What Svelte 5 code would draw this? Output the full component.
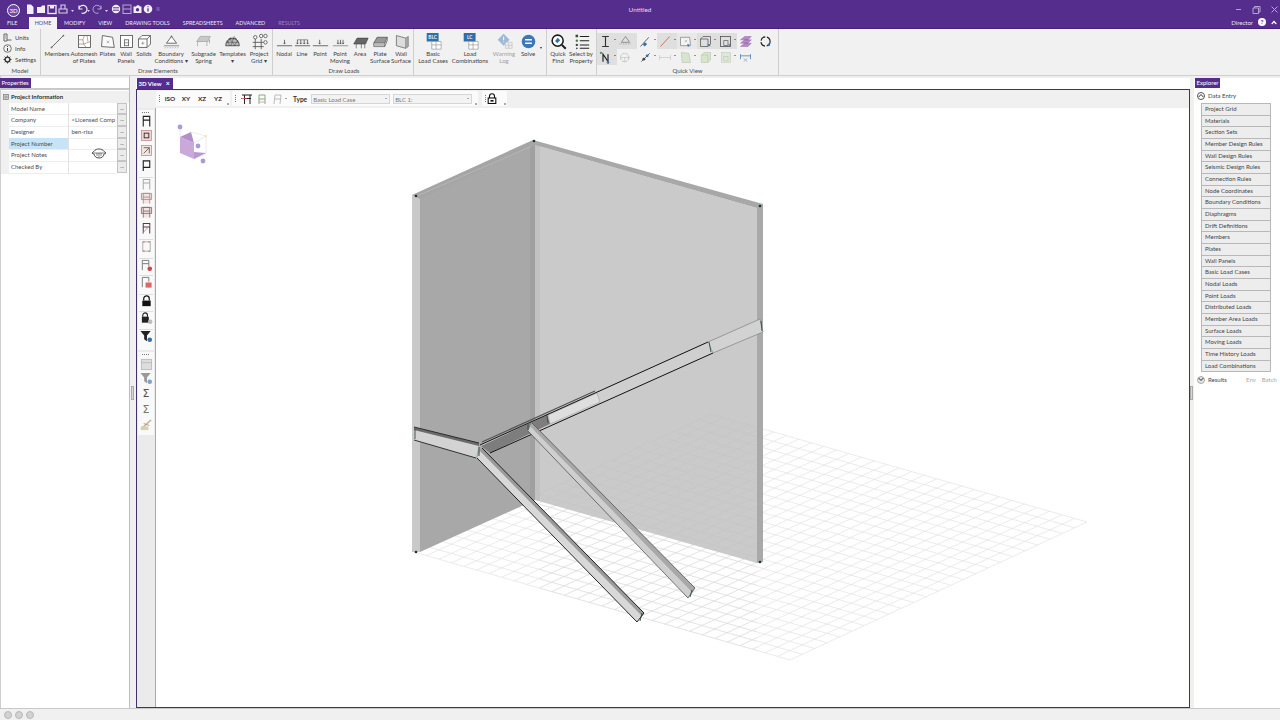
<script>
  const ln = 'fill="none" stroke="#555" stroke-width="1"';
  const arrow = (x, y) => `<path d="M${x} ${y - 5}V${y}" stroke="#333" stroke-width=".8"/><path d="M${x - 1.2} ${y - 1.5}L${x} ${y}L${x + 1.2} ${y - 1.5}" fill="none" stroke="#333" stroke-width=".6"/>`;

  const icons = {
    members: `<path d="M3 17L17 3" ${ln}/><circle cx="3" cy="17" r="1" fill="#666"/><circle cx="17" cy="3" r="1" fill="#666"/>`,
    automesh: `<rect x="3" y="3" width="14" height="14" fill="#fff" ${ln}/><path d="M3 8H8L10 3M8 8L9 13H3M9 13L17 10M9 13L12 17M13 3L14 10" fill="none" stroke="#8a6a5a" stroke-width=".7"/>`,
    plates: `<path d="M4 3L16 5L18 17L3 16Z" fill="#fafafa" ${ln}/><path d="M9 9L12 12M12 9L9 12" stroke="#888" stroke-width=".7"/>`,
    wall: `<rect x="3" y="3" width="14" height="14" fill="#fff" ${ln}/><rect x="7.5" y="8" width="5" height="7" fill="none" stroke="#555" stroke-width=".9"/><path d="M7.5 11.5h5" stroke="#555" stroke-width=".7"/>`,
    solids: `<path d="M3 7H13V17H3ZM3 7L7 3H17V13L13 17M13 7L17 3" fill="#fff" ${ln}/><path d="M8 10v4M6 12h4" stroke="#777" stroke-width=".7"/>`,
    boundary: `<path d="M10 4L4 12H16Z" fill="#fff" ${ln}/><path d="M1 15H19" stroke="#666" stroke-width=".8"/><path d="M3 16.5L2 18M6 16.5L5 18M9 16.5L8 18M12 16.5L11 18M15 16.5L14 18M18 16.5L17 18" stroke="#888" stroke-width=".6"/><circle cx="10" cy="4" r="1" fill="#666"/>`,
    subgrade: `<path d="M2 10L6 4H18L15 10Z" fill="#c8c8c8" stroke="#888" stroke-width=".6"/><path d="M3 11V15M14 11V15M17 8V12" stroke="#777" stroke-width="1" stroke-dasharray="1 .6"/>`,
    templates: `<path d="M2 15A8 9 0 0 1 18 15Z" fill="#bbb" stroke="#444" stroke-width="1"/><path d="M4 12L8 5M8 15L12 4M12 15L16 9M3 11H17M5 7H15M7 15L3 9M13 15L6 6M17 11L12 4" stroke="#333" stroke-width=".5"/>`,
    grid: `<path d="M5 7V19M12 7V19M2 11H15M2 16H15" ${ln}/><circle cx="5" cy="5" r="2" fill="#fff" ${ln}/><circle cx="12" cy="3.5" r="2" fill="#fff" ${ln}/><circle cx="17" cy="3.5" r="2" fill="#fff" ${ln}/><circle cx="17" cy="11" r="2" fill="#fff" ${ln}/>`,
    nodal: `<path d="M1 15H19" stroke="#555"/>${arrow(10, 13)}`,
    line: `<path d="M1 15H19" stroke="#555"/><path d="M4 8H16" stroke="#555" stroke-width=".7"/>${arrow(4, 13)}${arrow(8, 13)}${arrow(12, 13)}${arrow(16, 13)}`,
    point: `<path d="M1 15H19" stroke="#555"/>${arrow(9, 13)}`,
    moving: `<path d="M1 15H19" stroke="#888"/>${arrow(7, 13)}${arrow(10, 13)}${arrow(13, 13)}`,
    area: `<path d="M2 13L6 6H19L16 13Z" fill="#666" stroke="#333" stroke-width=".6"/><path d="M5 13V18M11 13V18M15 13V18" stroke="#444" stroke-width=".7"/>`,
    plate: `<path d="M2 12L6 5H18L15 12Z" fill="#999" stroke="#333" stroke-width=".7"/><path d="M2 12V16H15V12M15 16L18 9V5" fill="#bbb" stroke="#555" stroke-width=".7"/>`,
    wallsurf: `<path d="M4 3L15 6V18L4 15Z" fill="#ddd" stroke="#555" stroke-width=".8"/><path d="M15 6L18 4V16L15 18" fill="#aaa" stroke="#555" stroke-width=".6"/>`,
    blc: `<rect x="2" y="0" width="14" height="10" fill="#2f70ac"/><text x="9" y="7.6" text-anchor="middle" fill="#fff" font-size="5.6" font-weight="600">BLC</text><path d="M8 10H19V19H8ZM8 14H19M13 10V19" fill="#fff" stroke="#888" stroke-width=".7"/>`,
    lc: `<rect x="2" y="0" width="14" height="10" fill="#2f70ac"/><text x="9" y="7.6" text-anchor="middle" fill="#fff" font-size="5.6" font-weight="600">LC</text><path d="M8 10H19V19H8ZM8 14H19M13 10V19" fill="#fff" stroke="#888" stroke-width=".7"/>`,
    warning: `<path d="M9 1L16 8L9 15L2 8Z" fill="#9db9d6"/><path d="M9 4.5V8.5M9 10V11" stroke="#fff" stroke-width="1.2"/><path d="M11 11H19V18H11ZM11 14.5H19M15 11V18" fill="#eee" stroke="#bbb" stroke-width=".7"/>`,
    solve: `<circle cx="10" cy="10" r="8" fill="#3f77b6"/><path d="M6 8H14M6 12H14" stroke="#fff" stroke-width="1.7"/>`,
    find: `<circle cx="9" cy="9" r="6.5" fill="#fff" stroke="#1c1c1c" stroke-width="1.8"/><path d="M14 14L18.5 18.5" stroke="#1c1c1c" stroke-width="2.4"/><path d="M9 5.5L12 8.5L8.5 12L6 9.5Z" fill="#2f70ac"/>`,
    select: `<path d="M8 4H19M8 9H19M8 14H19M8 18H19" stroke="#222" stroke-width="1.2"/><rect x="3" y="2" width="3" height="3" fill="#444"/><circle cx="4.5" cy="9" r="1.4" fill="#3c7c44"/><circle cx="4.5" cy="14" r="1.4" fill="#444"/><circle cx="4.5" cy="18" r="1" fill="#444"/>`
  };

  const groups = [
    { name: "Draw Elements", width: 232, pad: 3, items: [
      { label: "Members", icon: "members", w: 26 },
      { label: "Automesh\nof Plates", icon: "automesh", w: 28 },
      { label: "Plates", icon: "plates", w: 19 },
      { label: "Wall\nPanels", icon: "wall", w: 18 },
      { label: "Solids", icon: "solids", w: 18 },
      { label: "Boundary\nConditions ▾", icon: "boundary", w: 36 },
      { label: "Subgrade\nSpring", icon: "subgrade", w: 29 },
      { label: "Templates\n▾", icon: "templates", w: 29 },
      { label: "Project\nGrid ▾", icon: "grid", w: 24 }
    ]},
    { name: "Draw Loads", width: 141, pad: 2, items: [
      { label: "Nodal", icon: "nodal", w: 18 },
      { label: "Line", icon: "line", w: 18 },
      { label: "Point", icon: "point", w: 18 },
      { label: "Point\nMoving", icon: "moving", w: 22 },
      { label: "Area", icon: "area", w: 18 },
      { label: "Plate\nSurface", icon: "plate", w: 22 },
      { label: "Wall\nSurface", icon: "wallsurf", w: 20 }
    ]},
    { name: "", width: 133, pad: 2, items: [
      { label: "Basic\nLoad Cases", icon: "blc", w: 34 },
      { label: "Load\nCombinations", icon: "lc", w: 40 },
      { label: "Warning\nLog", icon: "warning", w: 28, dim: true },
      { label: "Solve", icon: "solve", w: 20 }
    ]},
    { name: "", width: 50, pad: 0, items: [
      { label: "Quick\nFind", icon: "find", w: 22 },
      { label: "Select by\nProperty", icon: "select", w: 24 }
    ]}
  ];

  const quick = [
    { svg: `<path d="M5 3H13M9 3V15M5 15H13" stroke="#333" stroke-width="1.4"/>`, on: true, drop: true },
    { svg: `<path d="M9 3L4 10H14Z" fill="none" stroke="#777" stroke-width=".9"/><path d="M2 12H16" stroke="#999" stroke-dasharray="1 1"/>`, on: true },
    { svg: `<path d="M3 15L13 4" stroke="#444" stroke-width="1"/><path d="M8 10l3 2l-3 3l-2-2z" fill="#2f70ac"/>`, drop: true },
    { svg: `<path d="M3 15L14 3" stroke="#c87a50" stroke-width="1.2"/>`, on: true, drop: true },
    { svg: `<path d="M3 4H14L15 14H3Z" fill="#f4f4f4" stroke="#777" stroke-width=".8"/><path d="M8 7l3 3M11 7l-3 3" stroke="#999" stroke-width=".6"/><path d="M11 12l3 1l-2 3z" fill="#2f70ac"/>`, on: true, light: true, drop: true },
    { svg: `<path d="M3 6H12V15H3ZM3 6L6 3H15V12L12 15" fill="none" stroke="#555" stroke-width=".9"/><path d="M11 13l3-1l1 3z" fill="#2f70ac"/>`, on: true, drop: true },
    { svg: `<rect x="3" y="3" width="12" height="12" fill="none" stroke="#555"/><rect x="7" y="8" width="5" height="6" fill="none" stroke="#555" stroke-width=".8"/><path d="M12 13l3-1v3z" fill="#2f70ac"/>`, on: true, drop: true },
    { svg: `<path d="M3 7L8 3H16L12 7ZM3 11L8 7H16L12 11ZM3 15L8 11H16L12 15Z" fill="#b48ac4" stroke="#8a5a9e" stroke-width=".5"/>` },
    { svg: `<circle cx="9" cy="9" r="5.5" fill="none" stroke="#222" stroke-width="1.4" stroke-dasharray="7 2"/><circle cx="13" cy="13" r="1.6" fill="#2f70ac"/>` },
    { svg: `<circle cx="3.5" cy="3.5" r="1.3" fill="#3c9c54"/><path d="M6 14V5L12 14V5" fill="none" stroke="#222" stroke-width="1.4"/><path d="M12 11v5M10.5 14.5L12 16.5L13.5 14.5" fill="none" stroke="#2f70ac" stroke-width="1.1"/>`, on: true, drop: true },
    { svg: `<circle cx="8" cy="9" r="5" fill="none" stroke="#aaa" stroke-width=".8" stroke-dasharray="3 1"/><path d="M3 9H14M8 9V15" stroke="#bbb" stroke-width=".7"/>` },
    { svg: `<path d="M4 14L14 4" stroke="#444"/><circle cx="7" cy="11" r="1.7" fill="#444"/><circle cx="11" cy="7" r="1.7" fill="#2f70ac"/>`, drop: true },
    { svg: `<path d="M2 6V12M15 6V12M2 9H15" stroke="#ccc"/>`, drop: true },
    { svg: `<path d="M4 3L13 4L15 15L5 15Z" fill="#d8e4cc" stroke="#bbb" stroke-width=".7"/>`, drop: true },
    { svg: `<path d="M4 6H12V15H4ZM4 6L7 3H15V12L12 15" fill="#d8e4cc" stroke="#b8c4ac" stroke-width=".7"/>`, drop: true },
    { svg: `<rect x="4" y="3" width="11" height="12" fill="#dfe8d6" stroke="#c4ccbc" stroke-width=".7"/><rect x="7" y="8" width="5" height="5" fill="none" stroke="#bbb" stroke-width=".6"/>`, drop: true },
    { svg: `<path d="M3 5V11M15 5V11M3 7H15" stroke="#3f77b6" stroke-width=".9"/><path d="M7 10L11 14M11 10L7 14" stroke="#888" stroke-width=".7"/>` }
  ];

  const properties = [
    { label: "Model Name", value: "" },
    { label: "Company", value: "<Licensed Comp" },
    { label: "Designer", value: "ben-risa" },
    { label: "Project Number", value: "", selected: true },
    { label: "Project Notes", value: "" },
    { label: "Checked By", value: "" }
  ];

  const explorerItems = [
    "Project Grid", "Materials", "Section Sets", "Member Design Rules", "Wall Design Rules",
    "Seismic Design Rules", "Connection Rules", "Node Coordinates", "Boundary Conditions",
    "Diaphragms", "Drift Definitions", "Members", "Plates", "Wall Panels", "Basic Load Cases",
    "Nodal Loads", "Point Loads", "Distributed Loads", "Member Area Loads", "Surface Loads",
    "Moving Loads", "Time History Loads", "Load Combinations"
  ];

  const frame = "M3.5 12.5V1.5H10.5V12.5M3.5 5.5H10.5";
  // y is the icon's centre on the page, the gap to the next one gives the row height
  const sideTools = [
    { y: 122, svg: `<path d="${frame}" fill="none" stroke="#222" stroke-width="1.2"/>` },
    { y: 136, svg: `<rect x="1.5" y="1.5" width="11" height="11" fill="#f0d8d4" stroke="#b88" stroke-width=".8"/><rect x="4.5" y="4.5" width="5" height="5" fill="none" stroke="#333" stroke-width="1"/>` },
    { y: 151, svg: `<rect x="1.5" y="1.5" width="11" height="11" fill="#f4e4e0" stroke="#b88" stroke-width=".8"/><path d="M4 10L10 4M4 4H10V10" fill="none" stroke="#555" stroke-width=".9"/>` },
    { y: 166, sep: true, svg: `<path d="M3.5 13V2H10.5V9H3.5" fill="none" stroke="#222" stroke-width="1.2"/>` },
    { y: 185, svg: `<path d="${frame}" fill="none" stroke="#aaa" stroke-width="1.1"/>` },
    { y: 199, svg: `<path d="${frame}M1.5 1.5H12.5V8H1.5Z" fill="#f2e4e2" stroke="#a88" stroke-width=".9"/>` },
    { y: 213, svg: `<path d="${frame}M1.5 1.5H12.5V8H1.5Z" fill="#f2e4e2" stroke="#866" stroke-width=".9"/>` },
    { y: 229, sep: true, svg: `<path d="${frame}" fill="none" stroke="#444" stroke-width="1.1"/><path d="M3 12L11 3" stroke="#c88" stroke-width=".9"/>` },
    { y: 247, sep: true, svg: `<rect x="3" y="2" width="8" height="10" fill="none" stroke="#aaa" stroke-width="1"/><path d="M3 2h2M11 12H9M3 12h2M11 2H9" stroke="#c66" stroke-width="1"/>` },
    { y: 266, sep: true, svg: `<path d="M2.5 12V1.5H9.5V8M2.5 5H9.5" fill="none" stroke="#777" stroke-width="1"/><circle cx="10.5" cy="10.5" r="2.5" fill="#c44"/>` },
    { y: 283, sep: true, svg: `<path d="M2.5 12V1.5H9.5V6" fill="none" stroke="#777" stroke-width="1"/><rect x="6" y="7" width="6.5" height="5.5" fill="#d66"/>` },
    { y: 302, sep: true, svg: `<path d="M4 6V4A3 3 0 0 1 10 4V6" fill="none" stroke="#111" stroke-width="1.3"/><rect x="2.5" y="6" width="9" height="6" fill="#111"/>` },
    { y: 319, sep: true, svg: `<path d="M3 5V3.5A2.5 2.5 0 0 1 8 3.5V5" fill="none" stroke="#222" stroke-width="1.2"/><rect x="2" y="5" width="7.5" height="6.5" fill="#222"/><circle cx="11" cy="10.5" r="2.4" fill="#bbb"/>` },
    { y: 337, svg: `<path d="M0.5 1H11.5L7.5 6V12L4.5 10V6Z" fill="#222"/><circle cx="10.5" cy="10.5" r="2.5" fill="#2f70ac"/>` }
  ];
  const sideTools2 = [
    { y: 365, svg: `<rect x="1.5" y="1.5" width="11" height="11" fill="#ddd" stroke="#bbb"/><path d="M1.5 5H12.5" stroke="#bbb"/>` },
    { y: 379, svg: `<path d="M0.5 1H11.5L7.5 6V12L4.5 10V6Z" fill="#999"/><circle cx="10.5" cy="10.5" r="2.5" fill="#7aa4d4"/>` },
    { y: 394, text: "Σ" },
    { y: 410, text: "Σ", dot: true },
    { y: 425, svg: `<path d="M1 12L12 2" stroke="#b8c090" stroke-width="1.6"/><path d="M1 9H9V13H1Z" fill="#d8d0a8"/><path d="M4 6L10 8" stroke="#c89" stroke-width="1"/>` }
  ];
  const rowHeight = (list, i) => (i + 1 < list.length ? list[i + 1].y - list[i].y : 14);

  // floor grid is a parallelogram in page coordinates
  const L = [414, 552], F = [790, 660], R = [1087, 522];
  const B = [L[0] + R[0] - F[0], L[1] + R[1] - F[1]];
  const mix = (a, b, t) => [a[0] + (b[0] - a[0]) * t, a[1] + (b[1] - a[1]) * t];
  let floorLines = [];
  for (let i = 0; i <= 30; i++) floorLines.push([mix(L, F, i / 30), mix(B, R, i / 30)]);
  for (let j = 0; j <= 24; j++) floorLines.push([mix(L, B, j / 24), mix(F, R, j / 24)]);

  // part of the floor that shows through the right wall
  const yAt = (l, x) => l[0][1] + ((x - l[0][0]) * (l[1][1] - l[0][1])) / (l[1][0] - l[0][0]);
  const wallLines = floorLines
    .filter((l) => l[1][0] > 540 && l[0][0] < 757)
    .map((l) => {
      const x1 = Math.max(l[0][0], 540);
      const x2 = Math.min(l[1][0], 757);
      return [x1, yAt(l, x1), x2, yAt(l, x2)];
    });

  const ticks = [
    [415, 429, 415, 439], [479, 447, 479, 456], [709, 342, 711, 352], [761, 321, 762, 331],
    [642, 613, 640, 621], [692, 590, 690, 597], [547, 415, 548, 423], [528, 423, 528, 430]
  ];
  const nodes = [[416, 196], [534, 141], [760, 206], [416, 552], [760, 562]];
</script>

<div class="app">
  <header class="titlebar">
    <div class="quick-row">
      <span class="logo">3D</span>
      <svg class="qat" width="170" height="14" viewBox="0 0 170 14">
        <path d="M27 2.5H31L33.5 5V12H27Z" fill="#f2eef8"/>
        <path d="M37 5H41L42 3.5H45V11H37Z" fill="#f2eef8"/>
        <rect x="48" y="3.5" width="8" height="8" fill="none" stroke="#f2eef8" stroke-width="1.3"/><rect x="50" y="3.5" width="4" height="3" fill="#f2eef8"/>
        <path d="M59 7H67V11H59ZM61 7V3H65V7" fill="none" stroke="#ddd0ee" stroke-width="1.1"/>
        <path d="M71 8h3l-1.5 2z" fill="#ddd0ee"/>
        <path d="M79 3.5V7H82.5M79 7A4 4 0 1 1 81.5 11" fill="none" stroke="#f2eef8" stroke-width="1.2"/>
        <path d="M87 8h3l-1.5 2z" fill="#ddd0ee"/>
        <path d="M101 3.5V7H97.5M101 7A4 4 0 1 0 98.5 11" fill="none" stroke="#b9a6d6" stroke-width="1"/>
        <path d="M105 8h3l-1.5 2z" fill="#ddd0ee"/>
        <circle cx="116" cy="7" r="4.2" fill="#f2eef8"/><path d="M113 5.8h6M113 8.2h6" stroke="#552d8d" stroke-width="1"/>
        <rect x="123" y="3" width="8" height="8.5" fill="none" stroke="#b9a6d6" stroke-width="1"/><path d="M123 7h8" stroke="#b9a6d6"/>
        <path d="M133.5 4.5H136L137 3.3H139L140 4.5H141.5V11H133.5Z" fill="#f2eef8"/><circle cx="137.5" cy="7.7" r="1.7" fill="#552d8d"/>
        <circle cx="148" cy="7" r="4.3" fill="#f2eef8"/><path d="M148 6.2V9.6M148 4.2V5.2" stroke="#552d8d" stroke-width="1.3"/>
        <path d="M156.5 6h3M156.5 8h3" stroke="#b9a6d6" stroke-width=".7"/>
      </svg>
      <span class="doc-title">Untitled</span>
      <svg class="window-btns" width="48" height="12" viewBox="0 0 48 12">
        <path d="M2 6.5H7" stroke="#b5a4d0"/><path d="M19 5H24.5V10.5H19ZM20.5 5V3.5H26V9H24.5" fill="none" stroke="#b5a4d0"/><path d="M37.5 3.5L43.5 9.5M43.5 3.5L37.5 9.5" stroke="#b5a4d0"/>
      </svg>
    </div>
    <div class="tab-row">
      <nav class="tabs">
        <span class="tab file">FILE</span>
        <span class="tab active">HOME</span>
        <span class="tab">MODIFY</span>
        <span class="tab">VIEW</span>
        <span class="tab">DRAWING TOOLS</span>
        <span class="tab">SPREADSHEETS</span>
        <span class="tab">ADVANCED</span>
        <span class="tab off">RESULTS</span>
      </nav>
      <div class="user">
        <span>Director</span>
        <span class="help">?</span>
        <svg width="6" height="5" viewBox="0 0 6 5"><path d="M.7 4L3 1.5L5.3 4" fill="none" stroke="#fff" stroke-width="1.2"/></svg>
      </div>
    </div>
  </header>

  <section class="ribbon">
    <div class="group model" style="width: 41px">
      <div class="model-items">
        <div class="model-row">
          <svg width="9" height="9" viewBox="0 0 9 9"><path d="M1 1H4V8H1ZM4 7H8.5" fill="none" stroke="#666"/><path d="M2 3h1M2 5h1" stroke="#666" stroke-width=".6"/></svg>Units
        </div>
        <div class="model-row">
          <svg width="9" height="9" viewBox="0 0 9 9"><circle cx="4.5" cy="4.5" r="3.8" fill="none" stroke="#555" stroke-width=".8"/><path d="M4.5 4V7M4.5 2V3" stroke="#444"/></svg>Info
        </div>
        <div class="model-row">
          <svg width="9" height="9" viewBox="0 0 9 9"><circle cx="4.5" cy="4.5" r="2.4" fill="none" stroke="#333" stroke-width="1.4"/><path d="M4.5 .5V8.5M.5 4.5H8.5M1.7 1.7L7.3 7.3M7.3 1.7L1.7 7.3" stroke="#333" stroke-width=".9" stroke-dasharray="1.4 5.2 1.4 5"/></svg>Settings
        </div>
      </div>
      <div class="group-name">Model</div>
    </div>

    {#each groups as g}
      <div class="group" style="width: {g.width}px; padding-left: {g.pad}px">
        <div class="group-items">
          {#each g.items as item}
            <div class="rbtn" class:dim={item.dim} style="width: {item.w}px">
              <svg class="ricon" width="17" height="17" viewBox="0 0 20 20">{@html icons[item.icon]}</svg>
              <span class="rlabel">{item.label}</span>
            </div>
          {/each}
          {#if g.items[g.items.length - 1].label === "Solve"}
            <span class="solve-drop"></span>
          {/if}
        </div>
        <div class="group-name">{g.name}</div>
      </div>
    {/each}

    <div class="group quick-view" style="width: 182px">
      <div class="quick-grid">
        {#each quick as q}
          <div class="qcell" class:on={q.on} class:light={q.light}>
            <svg width="15" height="15" viewBox="0 0 18 18">{@html q.svg}</svg>
            {#if q.drop}<span class="mini-drop"></span>{/if}
          </div>
        {/each}
      </div>
      <div class="group-name">Quick View</div>
    </div>
  </section>

  <main class="workspace">
    <aside class="properties">
      <div class="panel-tabs"><span class="panel-tab">Properties</span></div>
      <div class="panel-body">
        <div class="prop-head">
          <svg width="6" height="6" viewBox="0 0 7 7"><rect x=".5" y=".5" width="6" height="6" fill="#ddd" stroke="#777" stroke-width=".8"/><path d="M1.5 2.5h4M1.5 4.5h4" stroke="#555" stroke-width=".7"/></svg>
          Project Information
        </div>
        {#each properties as p}
          <div class="prop-row">
            <span class="prop-name" class:selected={p.selected}>{p.label}</span>
            <span class="prop-value">{p.value}</span>
            <span class="prop-more">...</span>
          </div>
        {/each}
        <svg class="hand" width="16" height="11" viewBox="0 0 16 11">
          <path d="M3 3.5C4 1.5 6 1 8 1S12 1.5 13 3.5L15 5L13 6C12.5 8.5 11 10 8 10S3.5 8.5 3 6L1 5Z" fill="#fff" stroke="#222" stroke-width=".8"/>
          <path d="M3 5H13M6 5V8M8 5V9M10 5V8" stroke="#333" stroke-width=".6"/>
        </svg>
      </div>
    </aside>

    <div class="splitter"><span class="grip"></span></div>

    <section class="view">
      <div class="view-tabs">
        <span class="view-tab">3D View <b>×</b></span>
      </div>
      <div class="view-frame">
        <div class="view-toolbar">
          <div class="tb tb-views">
            <span class="gripper"></span>
            <span class="vbtn">ISO</span><span class="vbtn">XY</span><span class="vbtn">XZ</span><span class="vbtn">YZ</span>
          </div>
          <div class="tb tb-type">
            <span class="gripper"></span>
            <svg width="12" height="12" viewBox="0 0 12 12"><path d="M1 2H11M3.5 5.5H10M3.5 2V11M9 2V11" fill="none" stroke="#222"/><path d="M0 5.5H6" stroke="#c44" stroke-width=".8"/></svg>
            <svg width="12" height="12" viewBox="0 0 12 12"><path d="M3 11V2H9V11M3 6H9" fill="none" stroke="#8a8" stroke-width="1"/><path d="M3 9H9" stroke="#c99" stroke-width=".8"/></svg>
            <svg width="12" height="12" viewBox="0 0 12 12"><path d="M3 11L4 2H10L9 11M4 6H10" fill="none" stroke="#bbb" stroke-width="1"/></svg>
            <span class="tiny-drop"></span>
            <b class="type-label">Type</b>
            <span class="combo">Basic Load Case<i></i></span>
            <span class="combo">BLC 1:<i></i></span>
          </div>
          <div class="tb tb-lock">
            <span class="gripper"></span>
            <svg width="10" height="11" viewBox="0 0 10 11"><path d="M2.5 5V3.2A2.5 2.5 0 0 1 7.5 3.2V5" fill="none" stroke="#111" stroke-width="1.1"/><rect x="1.2" y="5" width="7.6" height="5.5" fill="none" stroke="#111" stroke-width="1.1"/><rect x="3.5" y="7" width="3" height="1.6" fill="#111"/></svg>
          </div>
        </div>
        <div class="view-main">
          <div class="side-col">
            <div class="side-group first">
              <span class="gripper-h"></span>
              {#each sideTools as t, i}
                <div class="side-tool" class:sep={t.sep} style="height: {rowHeight(sideTools, i)}px">
                  <svg width="13" height="13" viewBox="0 0 14 14">{@html t.svg}</svg>
                </div>
              {/each}
            </div>
            <div class="side-group second">
              <span class="gripper-h"></span>
              {#each sideTools2 as t, i}
                <div class="side-tool" style="height: {rowHeight(sideTools2, i)}px">
                  {#if t.text}
                    <span class="sigma" class:faded={t.dot}>{t.text}</span>
                  {:else}
                    <svg width="13" height="13" viewBox="0 0 14 14">{@html t.svg}</svg>
                  {/if}
                </div>
              {/each}
            </div>
          </div>

          <div class="canvas">
            <svg viewBox="156 108 1033 599" width="1033" height="599">
              <g stroke="#e2e2e2" stroke-width=".7">
                {#each floorLines as l}
                  <line x1={l[0][0]} y1={l[0][1]} x2={l[1][0]} y2={l[1][1]} />
                {/each}
              </g>

              <!-- walls -->
              <polygon points="412,195 420,198 420,552 412,552" fill="#c9c9c9" />
              <polygon points="420,198 535,145 535,500 420,552" fill="#a8a8a8" />
              <polygon points="412,195 533,140 538,144 420,199" fill="#a5a5a5" />
              <line x1="417" y1="196" x2="532" y2="146" stroke="#bdbdbd" stroke-width=".7" />
              <polygon points="530,147 535,145 535,500 530,502" fill="#a0a0a0" />
              <polygon points="535,145 757,208 757,563 535,500" fill="#cacaca" />
              <polygon points="535,145 540,146 540,501 535,500" fill="#c2c2c2" />
              <polygon points="533,140 763,204 763,208 757,208 535,145" fill="#a8a8a8" />
              <polygon points="757,207 763,205 763,562 757,563" fill="#a9a9a9" />
              <g stroke="#b4b4b4" stroke-width=".6" opacity=".2">
                {#each wallLines as l}
                  <line x1={l[0]} y1={l[1]} x2={l[2]} y2={l[3]} />
                {/each}
              </g>

              <!-- horizontal beam -->
              <polygon points="708,342 760,319 763,332 713,353" fill="#d2d2d2" stroke="#8a8a8a" stroke-width=".8" />
              <polygon points="480,445 708,342 713,353 490,453" fill="#cfcfcf" />
              <polygon points="548,415 597,393 600,402 550,424" fill="#dedede" stroke="#999" stroke-width=".5" />
              <polygon points="481,446 547,415 550,424 490,453" fill="#7d7d7d" />
              <path d="M480 445L708 342" stroke="#111" stroke-width="1" fill="none" />
              <path d="M482 442L595 391" stroke="#555" stroke-width="1.2" fill="none" />
              <path d="M490 453L713 353" stroke="#111" stroke-width="1" fill="none" />

              <!-- left stub -->
              <polygon points="414,427 479,444 476,458 414,440" fill="#d3d3d3" />
              <polygon points="414,427 479,443 479,446 414,430" fill="#6a6a6a" />
              <path d="M414 427L479 443M414 440L476 458" stroke="#222" stroke-width=".9" fill="none" />

              <!-- braces -->
              <polygon points="532,423 695,588 688,598 528,431" fill="#cfcfcf" />
              <polygon points="532,423 695,588 692,592 530,426" fill="#a8a8a8" />
              <path d="M532 423L695 588M528 431L688 598M695 588L688 598" stroke="#444" stroke-width=".7" fill="none" />

              <polygon points="482,448 644,613 637,622 477,458" fill="#d8d8d8" />
              <polygon points="482,448 644,613 642,616 480,451" fill="#9a9a9a" />
              <path d="M482 448L644 613M477 458L637 622M644 613L637 622" stroke="#111" stroke-width=".9" fill="none" />

              <g stroke="#2a4f34" stroke-width=".9">
                {#each ticks as t}
                  <line x1={t[0]} y1={t[1]} x2={t[2]} y2={t[3]} />
                {/each}
              </g>
              {#each nodes as n}
                <circle cx={n[0]} cy={n[1]} r="1.3" fill="#17372a" />
              {/each}

              <!-- orientation cube -->
              <g>
                <path d="M191 132L206 136V153L194 159M180 137V127M194 143L206 136" fill="none" stroke="#e4e0ec" stroke-width=".7" />
                <polygon points="180,137 191,132 194,143" fill="#b092c8" />
                <polygon points="180,137 194,143 194,159 180,153" fill="#c9a9d9" />
                <polygon points="194,152 206,153 194,159" fill="#b59ad0" />
                <circle cx="180" cy="127" r="2.4" fill="#a99bd6" />
                <circle cx="198" cy="146" r="2.4" fill="#a99bd6" />
                <circle cx="203" cy="161" r="2.4" fill="#a99bd6" />
                <circle cx="206" cy="136" r="1" fill="#f0e68c" />
              </g>
            </svg>
          </div>
        </div>
      </div>
    </section>

    <div class="splitter right"><span class="grip"></span></div>

    <aside class="explorer">
      <div class="panel-tabs"><span class="panel-tab">Explorer</span></div>
      <div class="exp-head">
        <span class="round"><svg width="6" height="5" viewBox="0 0 6 5"><path d="M.7 4L3 1.5L5.3 4" fill="none" stroke="#333" stroke-width="1"/></svg></span>
        Data Entry
      </div>
      <div class="exp-list">
        {#each explorerItems as item}
          <div class="exp-item">{item}</div>
        {/each}
      </div>
      <div class="exp-head results">
        <span class="round grey"><svg width="6" height="5" viewBox="0 0 6 5"><path d="M.7 1L3 3.5L5.3 1" fill="none" stroke="#333" stroke-width="1"/></svg></span>
        Results
        <span class="exp-links"><span>Env</span><span>Batch</span></span>
      </div>
    </aside>
  </main>

  <footer class="statusbar">
    <span class="dot"></span><span class="dot"></span><span class="dot"></span>
  </footer>
</div>

<style>
  :global(body) {
    margin: 0;
    background: #f0f0f0;
  }

  .app {
    width: 1280px;
    height: 720px;
    display: flex;
    flex-direction: column;
    overflow: hidden;
    font-family: Lato, "Open Sans", sans-serif;
    font-size: 6px;
    color: #3f3f3f;
    background: #f0f0f0;
  }

  /* title bar */
  .titlebar {
    height: 29px;
    flex: none;
    background: #552d8d;
    border-bottom: 1px solid #46217a;
    box-sizing: border-box;
    color: #fff;
  }
  .quick-row {
    height: 17px;
    display: flex;
    align-items: center;
    position: relative;
    padding-left: 7px;
  }
  .logo {
    width: 11px;
    height: 11px;
    margin-top: 3px;
    border-radius: 50%;
    border: 1px solid #fff;
    background: #6d48a1;
    font-size: 6px;
    line-height: 11px;
    text-align: center;
    flex: none;
  }
  .qat {
    flex: none;
    margin-left: -20px;
    margin-top: 1px;
  }
  .doc-title {
    position: absolute;
    left: 0;
    right: 0;
    text-align: center;
    color: #e4daf2;
    font-size: 6.4px;
    top: 6px;
  }
  .window-btns {
    position: absolute;
    right: -1.5px;
    top: 3px;
  }
  .tab-row {
    height: 11px;
    display: flex;
    justify-content: space-between;
  }
  .tabs {
    display: flex;
  }
  .tab {
    padding: 0 6.5px;
    line-height: 12px;
    height: 12px;
    color: #efe9f7;
    font-size: 5.4px;
  }
  .tab.file {
    width: 29px;
    padding: 0 0 0 7px;
    box-sizing: border-box;
  }
  .tab.active {
    width: 28px;
    padding: 0;
    text-align: center;
    background: #f3f3f3;
    color: #5d3a90;
    margin-right: .5px;
  }
  .tab.off {
    color: #9c83bf;
  }
  .user {
    display: flex;
    align-items: center;
    gap: 5px;
    padding-right: 3px;
    color: #e9e2f3;
    margin-top: -1px;
  }
  .help {
    width: 8px;
    height: 8px;
    border-radius: 50%;
    background: #fff;
    color: #552d8d;
    font-weight: 700;
    font-size: 6.4px;
    line-height: 8px;
    text-align: center;
  }

  /* ribbon */
  .ribbon {
    height: 47px;
    flex: none;
    display: flex;
    box-sizing: border-box;
    background: #f1f1f1;
    border-bottom: 1px solid #cfcfcf;
  }
  .group {
    flex: none;
    display: flex;
    flex-direction: column;
    box-sizing: border-box;
    border-right: 1px solid #cfcfcf;
  }
  .group-items {
    flex: 1;
    display: flex;
    position: relative;
  }
  .group-name {
    height: 9px;
    line-height: 10px;
    text-align: center;
    color: #4c4c4c;
    flex: none;
  }
  .rbtn {
    flex: none;
    display: flex;
    flex-direction: column;
    align-items: center;
    text-align: center;
    padding-top: 4px;
    box-sizing: border-box;
  }
  .ricon {
    flex: none;
  }
  .rlabel {
    line-height: 7px;
    margin-top: -.5px;
    white-space: pre;
  }
  .rbtn.dim {
    color: #a0a0a0;
  }
  .solve-drop {
    position: absolute;
    right: 4px;
    top: 18px;
    border: 1.5px solid transparent;
    border-top: 2px solid #333;
    border-bottom: 0;
  }
  .model-items {
    flex: 1;
    display: flex;
    flex-direction: column;
    gap: 2px;
    padding: 4px 0 0 3px;
  }
  .model-row {
    height: 9px;
    display: flex;
    align-items: center;
    gap: 3px;
  }
  .quick-grid {
    flex: 1;
    display: grid;
    grid-template-columns: repeat(9, 20px);
    grid-template-rows: 16px 16px;
    padding-top: 4px;
  }
  .qcell {
    position: relative;
    display: flex;
    align-items: center;
    padding-left: 1px;
    box-sizing: border-box;
    width: 19.5px;
  }
  .qcell.on {
    background: #dfdfdf;
  }
  .qcell.light {
    background: #e8e8e8;
  }
  .mini-drop {
    position: absolute;
    right: 1px;
    top: 6px;
    border: 1.2px solid transparent;
    border-top: 1.6px solid #333;
    border-bottom: 0;
  }

  /* workspace */
  .workspace {
    flex: 1;
    min-height: 0;
    display: flex;
  }
  .panel-tabs {
    height: 12px;
    box-sizing: border-box;
    padding-top: 2px;
    background: linear-gradient(#efefef 2px, #fff 2px);
    display: flex;
    flex: none;
  }
  .panel-tab {
    height: 10px;
    line-height: 10px;
    box-sizing: border-box;
    padding: 0 1.5px;
    background: #552d8d;
    color: #fff;
  }
  .properties {
    width: 130px;
    flex: none;
    display: flex;
    flex-direction: column;
    background: #fff;
    box-sizing: border-box;
    border-right: 1px solid #bdbdbd;
    border-left: 1px solid #cfcfcf;
  }
  .properties .panel-tab {
    margin-left: -1px;
    width: 31px;
  }
  .panel-body {
    flex: 1;
    position: relative;
    border-top: 2px solid #c8c8c8;
    padding-top: 1px;
    background: #fff;
  }
  .prop-head {
    height: 11.5px;
    display: flex;
    align-items: center;
    gap: 2px;
    padding-left: 2px;
    background: #f0f0f0;
    color: #2f2f2f;
    font-weight: 700;
  }
  .prop-row {
    height: 11.7px;
    display: grid;
    grid-template-columns: 8px 60px 48px 10px;
    align-items: stretch;
    line-height: 11.7px;
    box-sizing: border-box;
    color: #4c4c4c;
  }
  .prop-row::before {
    content: "";
    background: #f0f0f0;
  }
  .prop-name {
    padding-left: 2px;
    border-bottom: 1px solid #ededed;
    border-right: 1px solid #e2e2e2;
  }
  .prop-name.selected {
    background: #c6e3f8;
  }
  .prop-value {
    padding-left: 2.5px;
    border-bottom: 1px solid #ededed;
    white-space: nowrap;
  }
  .prop-more {
    background: #ebebeb;
    border: 1px solid #c4c4c4;
    box-sizing: border-box;
    line-height: 9px;
    text-align: center;
    color: #333;
    font-size: 5px;
    margin-bottom: 1px;
  }
  .hand {
    position: absolute;
    left: 90px;
    top: 58px;
  }
  .splitter {
    width: 6px;
    flex: none;
    position: relative;
    background: #f0f0f0;
  }
  .grip {
    position: absolute;
    left: 1px;
    top: 310px;
    width: 3px;
    height: 14px;
    background: #d8d8d8;
    border: 1px solid #aaa;
    box-sizing: border-box;
  }
  .splitter.right {
    width: 4px;
  }
  .splitter.right .grip {
    left: 0;
  }

  /* 3D view */
  .view {
    flex: none;
    width: 1054px;
    display: flex;
    flex-direction: column;
    min-height: 0;
  }
  .view-tabs {
    height: 13px;
    box-sizing: border-box;
    padding: 2px 0 0 1px;
    background: linear-gradient(#efefef 2px, #fff 2px);
    display: flex;
    flex: none;
  }
  .view-tab {
    width: 36px;
    box-sizing: border-box;
    height: 11px;
    line-height: 10px;
    padding-left: 1.5px;
    background: #552d8d;
    color: #fff;
    font-weight: 700;
  }
  .view-tab b {
    margin-left: 3px;
    font-size: 7px;
    font-weight: 700;
  }
  .view-frame {
    flex: 1;
    min-height: 0;
    display: flex;
    flex-direction: column;
    border: 1px solid #43306f;
  }
  .view-toolbar {
    height: 18px;
    flex: none;
    display: flex;
    background: #f0f0f0;
    padding: 1px 0 0 19px;
    box-sizing: border-box;
    gap: 2px;
  }
  .tb {
    height: 15px;
    background: #fbfbfb;
    border-radius: 1px;
    display: flex;
    align-items: center;
    box-sizing: border-box;
    position: relative;
  }
  .tb::after {
    content: "";
    position: absolute;
    right: 1px;
    bottom: 1px;
    width: 2px;
    height: 2px;
    background: #aaa;
  }
  .gripper {
    width: 1px;
    height: 8px;
    margin: 0 3px;
    background-image: linear-gradient(#777 50%, transparent 50%);
    background-size: 1px 2px;
    flex: none;
  }
  .tb-views {
    width: 74px;
    font-weight: 700;
    color: #333;
    font-size: 6.4px;
  }
  .vbtn {
    width: 16px;
    text-align: center;
  }
  .tb-views .gripper {
    margin-right: 2px;
  }
  .tb-type {
    width: 246px;
    gap: 3px;
  }
  .tb-type .gripper {
    margin-right: 2px;
  }
  .tiny-drop {
    border: 1.2px solid transparent;
    border-bottom: 1.8px solid #555;
    border-top: 0;
    margin-left: -1px;
  }
  .type-label {
    margin: 0 1px 0 3px;
    font-weight: 700;
    font-size: 6.6px;
    color: #333;
  }
  .combo {
    width: 79px;
    height: 10px;
    line-height: 9px;
    flex: none;
    box-sizing: border-box;
    background: #f3f3f3;
    border: 1px solid #d6d6d6;
    padding-left: 1px;
    color: #777;
    position: relative;
  }
  .combo i {
    position: absolute;
    right: 2px;
    top: 3.5px;
    border: 1.3px solid transparent;
    border-top: 1.6px solid #666;
    border-bottom: 0;
  }
  .tb-lock {
    width: 25px;
    margin-left: 2px;
  }
  .tb-lock .gripper {
    margin-right: 1px;
  }
  .view-main {
    flex: 1;
    min-height: 0;
    display: flex;
  }
  .side-col {
    width: 19px;
    flex: none;
    background: #ebebeb;
    border-right: 1px solid #a8a8a8;
    box-sizing: border-box;
    padding: 2px 0 0 1px;
    display: flex;
    flex-direction: column;
    gap: 2px;
  }
  .side-group {
    width: 16px;
    background: #f9f9f9;
    display: flex;
    flex-direction: column;
    align-items: center;
    box-sizing: border-box;
  }
  .side-group.first {
    padding-bottom: 6px;
  }
  .side-group.second {
    padding-bottom: 3px;
  }
  .gripper-h {
    width: 8px;
    height: 1px;
    margin: 2px 0;
    background-image: linear-gradient(90deg, #777 50%, transparent 50%);
    background-size: 2px 1px;
  }
  .second .gripper-h {
    margin-bottom: 3px;
  }
  .side-tool {
    width: 14px;
    flex: none;
    display: flex;
    align-items: flex-start;
    justify-content: center;
    box-sizing: border-box;
  }
  .side-tool.sep {
    border-bottom: 1px solid #dedede;
  }
  .sigma {
    font-family: "DejaVu Sans", sans-serif;
    font-size: 11px;
    line-height: 13px;
    color: #555;
  }
  .sigma.faded {
    color: #777;
  }
  .canvas {
    flex: 1;
    min-width: 0;
    background: #fff;
    overflow: hidden;
  }
  .canvas svg {
    display: block;
  }

  /* explorer */
  .explorer {
    flex: 1;
    min-width: 0;
    background: #fff;
    box-sizing: border-box;
    padding-left: 1px;
    display: flex;
    flex-direction: column;
  }
  .explorer .panel-tabs {
    margin-left: -1px;
    padding-left: 1px;
  }
  .explorer .panel-tab {
    width: 25px;
  }
  .exp-head {
    height: 15px;
    flex: none;
    display: flex;
    align-items: center;
    gap: 3px;
    padding-left: 2px;
    color: #444;
  }
  .round {
    width: 8px;
    height: 8px;
    border: 1px solid #555;
    border-radius: 50%;
    display: flex;
    align-items: center;
    justify-content: center;
    box-sizing: border-box;
  }
  .round.grey {
    border-color: #aaa;
    background: #e4e4e4;
  }
  .exp-list {
    margin-left: 6px;
    width: 70px;
    box-sizing: border-box;
    border-top: 1px solid #b8b8b8;
  }
  .exp-item {
    height: 11.68px;
    line-height: 10.5px;
    padding-left: 3px;
    box-sizing: border-box;
    background: #ededed;
    border: 1px solid #b8b8b8;
    border-top: 0;
    color: #444;
  }
  .results {
    position: relative;
  }
  .exp-links {
    position: absolute;
    left: 51px;
    display: flex;
    gap: 6px;
    color: #a8a8a8;
  }

  .statusbar {
    height: 12px;
    flex: none;
    display: flex;
    align-items: center;
    gap: 3px;
    padding: 1px 0 0 4px;
    box-sizing: border-box;
    background: #f0f0f0;
    border-top: 1px solid #c8c8c8;
  }
  .dot {
    width: 8px;
    height: 8px;
    border-radius: 50%;
    background: #d2d2d2;
    border: 1px solid #b8b8b8;
    box-sizing: border-box;
  }
</style>
